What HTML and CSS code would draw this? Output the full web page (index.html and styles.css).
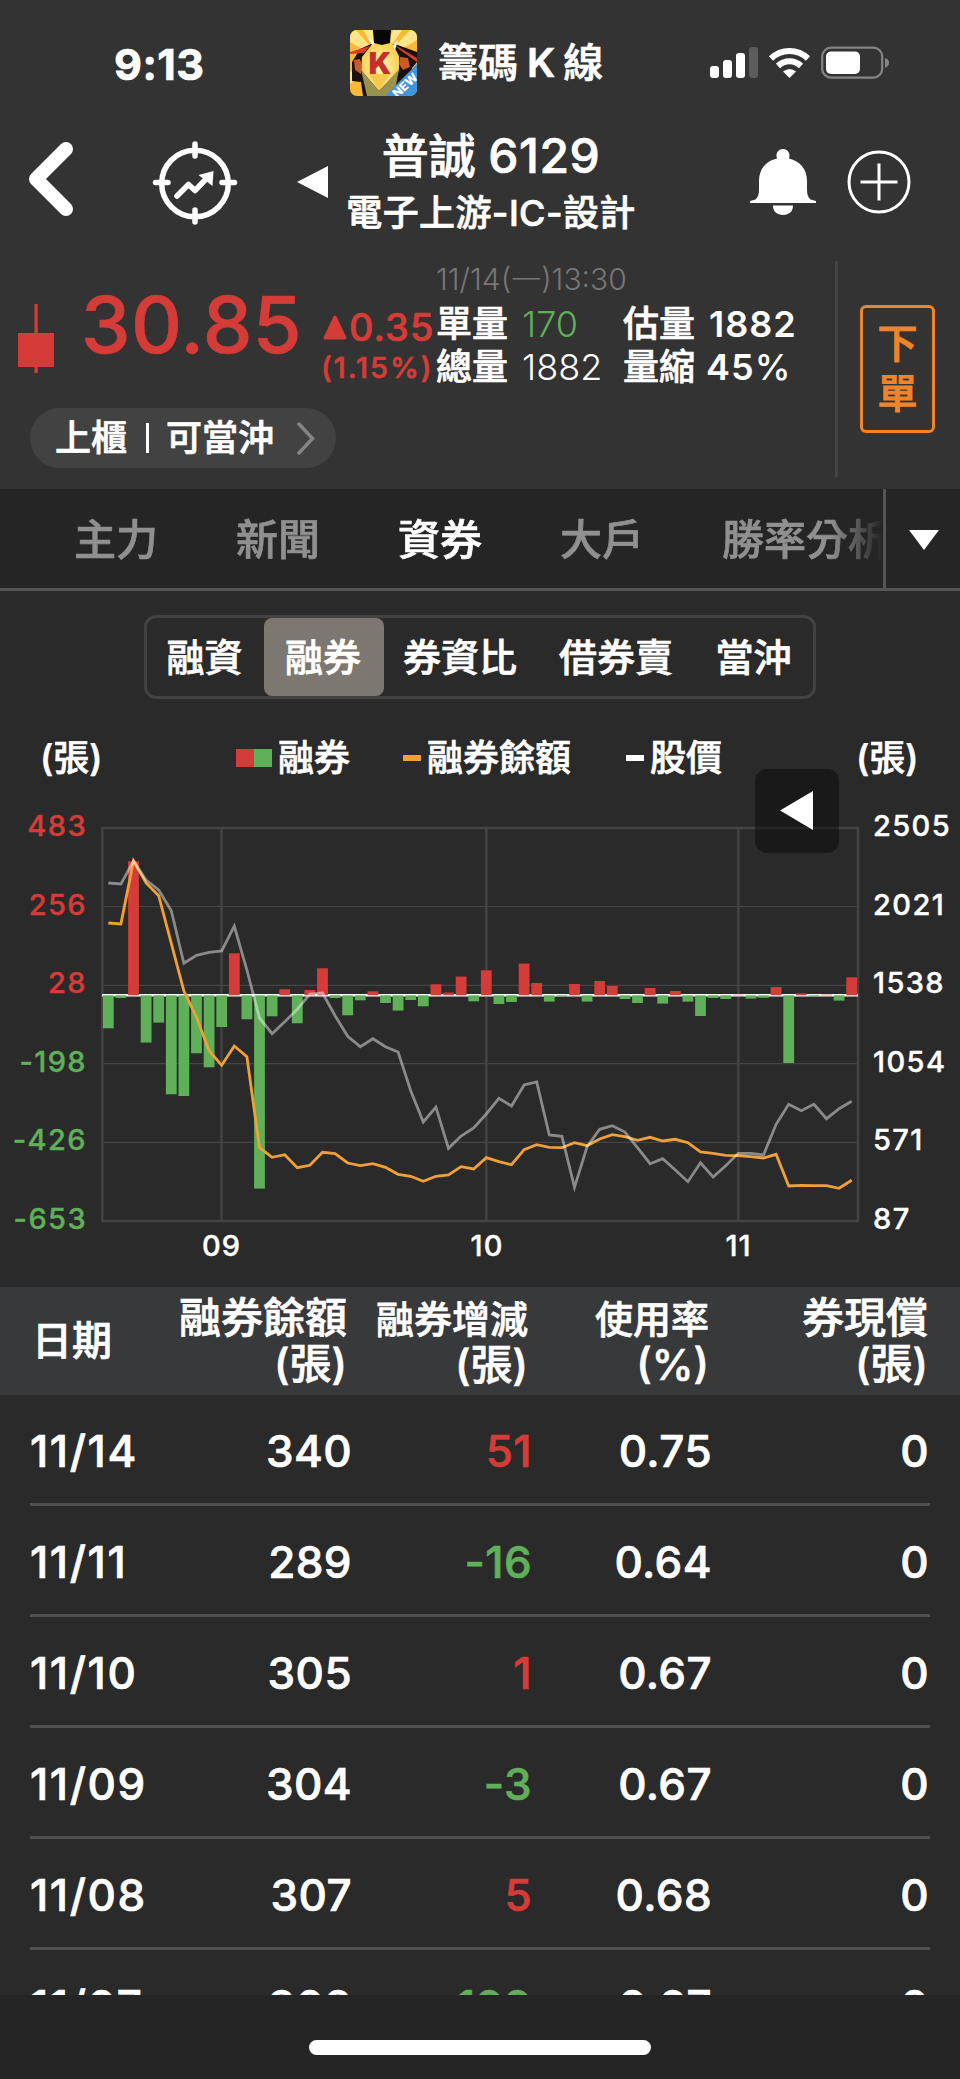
FILE: index.html
```html
<!DOCTYPE html>
<html lang="zh-Hant">
<head>
    <meta charset="UTF-8">
    <meta name="viewport" content="width=device-width, initial-scale=1.0">
    <title>普誠 6129</title>
    <link rel="stylesheet" href="styles.css">
</head>
<body>
    <header class="header">
        <div class="status-bar">
            <span class="clock">9:13</span>
            <div class="app-name">
                <svg class="app-icon" width="67" height="66" viewBox="0 0 67 66">
                    <defs>
                        <clipPath id="iconClip"><rect width="67" height="66" rx="7"/></clipPath>
                        <radialGradient id="iconGlow"><stop offset="0" stop-color="#fffbc0"/><stop offset="1" stop-color="#f8d050"/></radialGradient>
                    </defs>
                    <g clip-path="url(#iconClip)">
                        <rect width="67" height="66" fill="#f8b936"/>
                        <path d="M32 30L0 12V0h6zM32 30L13 0h9zM32 30L43 0h9zM32 30L60 0h7v10zM32 30L0 42v12z" fill="#fde58a"/>
                        <path d="M21 14L10 19 2 32v19l9 1 2 14h46l3-28 5-6V22L45 14z" fill="#19110f"/>
                        <path d="M20 16L0 22v2l14-1zM45 15l22 13v4L50 20z" fill="#d83b2c"/>
                        <path d="M23 13L12 27l-1 13 18 21 20-20V26L42 13z" fill="url(#iconGlow)"/>
                        <path d="M11 40l18 21 20-22-5 27H17z" fill="#9a9350"/>
                        <path d="M19 44l10 16 11-16z" fill="#f7c94a"/>
                        <path d="M23 16l-6-9 7 5zM43 15l5-5-3 10z" fill="#fff"/>
                        <path d="M23 0h18l-1 13-8 2-8-2z" fill="#080707"/>
                        <path d="M4 30l6-1 2 7-1 8-6-4zM50 27l8 1 2 9-7 3-4-6z" fill="#c85a2b"/>
                        <path d="M35 66L67 34v32z" fill="#4193dc"/>
                        <text x="30" y="43.500" class="icon-k">K</text>
                        <text x="56" y="59" class="icon-new" transform="rotate(-43 56 56)">NEW</text>
                    </g>
                </svg>
                <span>籌碼<span class="app-k">K</span>線</span>
            </div>
            <svg class="status-icons" width="180" height="34" viewBox="0 0 180 34">
                <rect x="0" y="20" width="9" height="12" rx="3" fill="#fff"/>
                <rect x="13" y="14" width="9" height="18" rx="3" fill="#fff"/>
                <rect x="26" y="7" width="9" height="25" rx="3" fill="#fff"/>
                <rect x="39" y="1" width="9" height="31" rx="3" fill="#5c5c5c"/>
                <path d="M61 12.500A26.500 26.500 0 0 1 98 12.500" fill="none" stroke="#fff" stroke-width="6"/>
                <path d="M68 20A16.500 16.500 0 0 1 91 20" fill="none" stroke="#fff" stroke-width="6"/>
                <path d="M73 25.500q6.500-5 13 0L79.500 32z" fill="#fff"/>
                <rect x="112.200" y="1.700" width="60" height="30" rx="9" fill="none" stroke="#858585" stroke-width="2.200"/>
                <rect x="116" y="5.500" width="34" height="22.500" rx="5" fill="#fff"/>
                <path d="M175 12q4 1 4 4.700t-4 5z" fill="#858585"/>
            </svg>
        </div>

        <nav class="nav">
            <svg class="back" width="46" height="76" viewBox="0 0 46 76">
                <path d="M38 8L8 38l30 30" fill="none" stroke="#fff" stroke-width="14" stroke-linecap="round" stroke-linejoin="round"/>
            </svg>
            <svg class="target" width="86" height="86" viewBox="0 0 86 86" fill="none" stroke="#fff" stroke-width="5.500" stroke-linecap="round">
                <circle cx="43" cy="43.500" r="33.300"/>
                <path d="M43 4v12M43 70v12M3.500 42.500H16M70 42.500h12.500"/>
                <path d="M25 56l11.500-11.500L43 50.500 55 38" stroke-linejoin="round"/>
                <path d="M61.500 31l-15 4 14 11z" fill="#fff" stroke="none"/>
            </svg>
            <svg class="prev" width="31" height="32" viewBox="0 0 31 32"><path d="M0 16L31 0v32z" fill="#fff"/></svg>
            <div class="stock-title">
                <h1>普誠 <span class="code">6129</span></h1>
                <p>電子上游-IC-設計</p>
            </div>
            <svg class="bell" width="66" height="67" viewBox="0 0 66 67" fill="#fff">
                <path d="M33 0c4 0 6.500 3 6.500 6.500 0 1-.2 2-.6 3C50 12 57 20 57 32v8c0 5 .8 8 3.500 10.500L66 52v2H0v-2l5.500-1.500C8.200 48 9 45 9 40v-8c0-12 7-20 18.100-22.500-.4-1-.6-2-.6-3C26.500 3 29 0 33 0z"/>
                <path d="M23 56.500h20c0 6-4 9.500-10 9.500s-10-3.500-10-9.500z"/>
            </svg>
            <svg class="plus" width="64" height="64" viewBox="0 0 64 64" fill="none" stroke="#fff" stroke-width="3">
                <circle cx="32" cy="32" r="30"/>
                <path d="M32 13.500v37M13.500 32h37"/>
            </svg>
        </nav>

        <section class="quote">
            <div class="quote-main">
                <div class="quote-row">
                    <svg class="candle" width="36" height="69" viewBox="0 0 36 69" fill="#d63c37">
                        <path d="M16.500 0h3.200v69h-3.200zM0 29h36v34H0z"/>
                    </svg>
                    <strong class="price">30.85</strong>
                    <div class="change">
                        <div class="change-value">
                            <svg width="24" height="25" viewBox="0 0 24 25"><path d="M12 2L22 23H2z" fill="#d63c37" stroke="#d63c37" stroke-width="3" stroke-linejoin="round"/></svg>
                            <span>0.35</span>
                        </div>
                        <div class="change-percent">(1.15%)</div>
                    </div>
                    <div class="volume">
                        <div class="time">11/14(一)13:30</div>
                        <div class="volume-row">
                            <span>單量</span><span class="light green">170</span><span>估量</span><span class="num">1882</span>
                        </div>
                        <div class="volume-row">
                            <span>總量</span><span class="light">1882</span><span>量縮</span><span class="num ratio">45<span class="sign">%</span></span>
                        </div>
                    </div>
                </div>
                <div class="pill">
                    <span>上櫃</span><i class="bar"></i><span>可當沖</span>
                    <svg width="18" height="33" viewBox="0 0 18 33"><path d="M2 2l13.500 14.500L2 31" fill="none" stroke="#858585" stroke-width="3.500" stroke-linecap="round"/></svg>
                </div>
            </div>
            <div class="order">
                <button class="order-button">下<br>單</button>
            </div>
        </section>
    </header>

    <div class="tabs">
        <div class="tab-list">
            <span>主力</span>
            <span>新聞</span>
            <span class="active">資券</span>
            <span>大戶</span>
            <span>勝率分析</span>
        </div>
        <div class="tab-more">
            <svg width="30" height="20" viewBox="0 0 30 20"><path d="M0 0h30L15 20z" fill="#fff"/></svg>
        </div>
    </div>

    <main>
        <div class="segment">
            <span>融資</span>
            <span class="active">融券</span>
            <span>券資比</span>
            <span>借券賣</span>
            <span>當沖</span>
        </div>

        <div class="legend">
            <span class="unit">(張)</span>
            <span class="key"><i class="mark red"></i><i class="mark green-mark"></i>融券</span>
            <span class="key"><i class="mark dash orange"></i>融券餘額</span>
            <span class="key"><i class="mark dash white"></i>股價</span>
            <span class="unit">(張)</span>
        </div>

        <div class="chart">
            <div class="axis axis-left">
                <span class="up">483</span><span class="up">256</span><span class="up">28</span>
                <span class="down">-198</span><span class="down">-426</span><span class="down">-653</span>
            </div>
            <svg class="plot" width="762" height="400" viewBox="99 825 762 400">
                <g stroke="#444" stroke-width="1.200">
                    <path d="M102 906.500h756M102 985.300h756M102 1063.700h756M102 1142.300h756"/>
                </g>
                <g stroke="#434343" stroke-width="2.500" fill="none">
                    <path d="M221.500 828v393M486.300 828v393M738.300 828v393"/>
                    <rect x="102.300" y="828" width="755.700" height="393"/>
                </g>
                <path d="M102 995.200h756" stroke="#fff" stroke-width="2.600"/>
                <g id="bars"></g>
                <polyline id="balanceLine" fill="none" stroke="#f0a036" stroke-width="2.800"/>
                <polyline id="priceLine" fill="none" stroke="#fff" stroke-opacity="0.450" stroke-width="2.800"/>
            </svg>
            <div class="axis axis-right">
                <span>2505</span><span>2021</span><span>1538</span>
                <span>1054</span><span>571</span><span>87</span>
            </div>
            <button class="expand">
                <svg width="33" height="39" viewBox="0 0 33 39"><path d="M0 19.500L33 0v39z" fill="#fff"/></svg>
            </button>
        </div>
        <div class="months"><span>09</span><span>10</span><span>11</span></div>

        <div class="table">
            <div class="row head">
                <span class="head-date">日期</span>
                <span>融券餘額<br>(張)</span>
                <span><small>融券增減</small><br>(張)</span>
                <span><small>使用率</small><br>(%)</span>
                <span>券現償<br>(張)</span>
            </div>
            <div class="row"><span>11/14</span><span>340</span><span class="up">51</span><span>0.75</span><span>0</span></div>
            <div class="row"><span>11/11</span><span>289</span><span class="down">-16</span><span>0.64</span><span>0</span></div>
            <div class="row"><span>11/10</span><span>305</span><span class="up">1</span><span>0.67</span><span>0</span></div>
            <div class="row"><span>11/09</span><span>304</span><span class="down">-3</span><span>0.67</span><span>0</span></div>
            <div class="row"><span>11/08</span><span>307</span><span class="up">5</span><span>0.68</span><span>0</span></div>
            <div class="row"><span>11/07</span><span>302</span><span class="down">-199</span><span>0.67</span><span>0</span></div>
        </div>
    </main>

    <footer class="home-bar"><div class="home-indicator"></div></footer>

    <script>
        var step = 12.6;
        var firstX = 108.3;
        var zeroY = 995.3;

        // bar heights, positive is up
        var bars = [-33, -2.7, 134, -47.3, -27.3, -99, -100.7, -58, -72, -31.7, 42, -24, -193.3, -21, 6,
            -28, 5.3, 27, -2.7, -20, -5, 4, -7.7, -15.3, -4.7, -11, 11, 2.7, 18.7, -6,
            25, -8.7, -6.7, 31.7, 12.3, -6.3, -1, 11.3, -6.3, 14.3, 9.3, -3.7, -7.7, 7.3, -8.3,
            4.3, -6.3, -20.7, -2.7, -3.7, 0.5, -3.3, -2.5, 8.3, -67.7, 2, -1, 0.6, -5.3, 18];

        var price = [883, 884, 861, 880, 890, 910.7, 963.3, 955.3, 952.3, 951, 926, 970, 1018, 1033.7, 1021.7,
            1009.3, 994, 993, 1015.7, 1036.3, 1046.7, 1038.7, 1046.7, 1052, 1090.7, 1122, 1107, 1148.3, 1136, 1128,
            1114, 1098.3, 1106, 1085, 1082, 1135, 1136.3, 1187.3, 1146.7, 1129.3, 1125.7, 1132, 1147.7, 1163.7, 1158.7,
            1170, 1181.7, 1162.7, 1177, 1165.7, 1153.3, 1153.3, 1155, 1124.3, 1104.3, 1110.7, 1104.3, 1118.7, 1108.7, 1101.3];

        var balance = [923, 924, 861, 883, 895.7, 943.3, 991, 1017.3, 1050.7, 1065.3, 1046, 1056.7, 1147.7, 1157.3, 1154.7,
            1167.7, 1165.3, 1152.3, 1153.7, 1163, 1165.7, 1163.7, 1167.3, 1174.3, 1176.3, 1181.3, 1176.3, 1175, 1166.7, 1169,
            1157.7, 1161.7, 1164.7, 1149.7, 1144.7, 1147.3, 1147.7, 1142.7, 1145.7, 1139, 1134.7, 1136.7, 1140.3, 1137.3, 1141,
            1139.3, 1142.7, 1152, 1153.3, 1155.3, 1155.7, 1156.7, 1158, 1154.3, 1186, 1185.3, 1185.7, 1185.7, 1188.3, 1180.3];

        function drawLine(id, values) {
            var points = values.map(function(y, i) {
                return (firstX + i * step).toFixed(1) + "," + y;
            });
            document.getElementById(id).setAttribute("points", points.join(" "));
        }

        bars.forEach(function(value, i) {
            var rect = document.createElementNS("http://www.w3.org/2000/svg", "rect");
            rect.setAttribute("x", firstX + i * step - 5.4);
            rect.setAttribute("y", value > 0 ? zeroY - value : zeroY);
            rect.setAttribute("width", 10.8);
            rect.setAttribute("height", Math.abs(value));
            rect.setAttribute("fill", value > 0 ? "#d63c37" : "#5fb058");
            document.getElementById("bars").appendChild(rect);
        });
        drawLine("balanceLine", balance);
        drawLine("priceLine", price);
    </script>
</body>
</html>
```
FILE: styles.css
```css
* {
    box-sizing: border-box;
}
body {
    margin: 0;
    width: 960px;
    height: 2079px;
    overflow: hidden;
    background-color: #2a2a2a;
    color: #fff;
    font-family: Inter, "Noto Sans CJK TC", sans-serif;
    font-weight: 500;
    -webkit-text-stroke: 0.7px;
    display: flex;
    flex-direction: column;
}
svg {
    display: block;
    flex: none;
}
button {
    padding: 0;
    font: inherit;
    color: inherit;
}
h1, p {
    margin: 0;
    font-weight: 500;
}
.up {
    color: #d63c37;
}
.down, .green {
    color: #5fb058;
}

/* header */
.header {
    height: 489px;
    flex: none;
    background-color: #333;
}
.status-bar {
    height: 126px;
    display: flex;
    align-items: center;
}
.clock {
    width: 236px;
    margin-left: 114px;
    padding-top: 2px;
    font-size: 43px;
    font-weight: 700;
    line-height: 50px;
    letter-spacing: 0.5px;
}
.app-name {
    width: 360px;
    display: flex;
    align-items: center;
    gap: 21px;
    font-size: 40px;
    line-height: 60px;
    white-space: nowrap;
}
.app-k {
    margin: 0 8px 0 9px;
    font-weight: 600;
}
.icon-k {
    font: 900 30px Inter, sans-serif;
    fill: #c62f2a;
    text-anchor: middle;
}
.icon-new {
    font: 800 12px Inter, sans-serif;
    fill: #fff;
    text-anchor: middle;
}
.nav {
    height: 112px;
    display: flex;
    align-items: center;
}
.back {
    margin: 0 0 6px 28px;
}
.target {
    margin: 2px 0 0 78px;
}
.prev {
    margin-left: 59px;
}
.stock-title {
    width: 326px;
    padding-top: 4px;
    text-align: center;
    white-space: nowrap;
}
.stock-title h1 {
    font-size: 47px;
    line-height: 58px;
}
.stock-title .code {
    font-size: 48px;
    letter-spacing: 0.5px;
}
.stock-title p {
    font-size: 36px;
    line-height: 56px;
    letter-spacing: 0.4px;
}
.bell {
    margin-left: 96px;
}
.plus {
    margin-left: 31px;
}
.quote {
    height: 251px;
    display: flex;
    padding-top: 23px;
}
.quote-main {
    width: 835px;
}
.quote-row {
    height: 147px;
    display: flex;
}
.candle {
    margin: 43px 0 0 18px;
}
.price {
    width: 240px;
    margin: 13px 0 0 27px;
    font-size: 79px;
    font-weight: 500;
    line-height: 100px;
    letter-spacing: 0.4px;
    color: #d63c37;
}
.change {
    width: 115px;
    margin-top: 45px;
    color: #d63c37;
    white-space: nowrap;
}
.change-value {
    display: flex;
    align-items: center;
    gap: 2px;
    font-size: 38px;
    line-height: 42px;
    letter-spacing: 1px;
}
.change-value svg {
    margin-left: 2px;
}
.change-percent {
    font-size: 29px;
    line-height: 40px;
    letter-spacing: 2px;
}
.volume {
    white-space: nowrap;
}
.time {
    height: 42px;
    font-size: 30px;
    font-weight: 300;
    line-height: 36px;
    color: #777;
    -webkit-text-stroke: 0;
}
.volume-row {
    display: grid;
    grid-template-columns: 86px 101px 86px 100px;
    font-size: 36px;
    line-height: 43px;
}
.light {
    font-weight: 300;
    -webkit-text-stroke: 0;
}
.num {
    font-weight: 600;
    letter-spacing: 1px;
    -webkit-text-stroke: 0;
}
.ratio {
    margin-left: -3px;
}
.sign {
    font-weight: 500;
}
.pill {
    width: 306px;
    height: 60px;
    margin-left: 30px;
    padding-left: 25px;
    display: flex;
    align-items: center;
    border-radius: 30px;
    background-color: #424242;
    font-size: 36px;
    line-height: 60px;
}
.pill .bar {
    width: 3px;
    height: 30px;
    margin: 0 17px 0 19px;
    background-color: #fff;
}
.pill svg {
    margin-left: 23px;
}
.order {
    height: 216px;
    width: 125px;
    padding: 44px 0 0 22px;
    border-left: 3px solid #444;
}
.order-button {
    display: block;
    width: 75px;
    height: 128px;
    border: 3px solid #ef8429;
    border-radius: 6px;
    background: none;
    color: #ef8429;
    font-size: 40px;
    line-height: 50px;
    -webkit-text-stroke: 1px;
}

/* tabs */
.tabs {
    height: 102px;
    flex: none;
    display: flex;
    border-bottom: 3px solid #555;
    background-color: #252525;
    font-size: 42px;
    line-height: 102px;
}
.tab-list {
    width: 883px;
    padding-left: 74px;
    display: flex;
    gap: 78px;
    overflow: hidden;
    white-space: nowrap;
    color: #909090;
    -webkit-mask-image: linear-gradient(to right, #000 830px, transparent 883px);
    mask-image: linear-gradient(to right, #000 830px, transparent 883px);
}
.tab-list .active {
    color: #fff;
}
.tab-more {
    flex: 1;
    padding: 2px 0 0 2px;
    display: flex;
    align-items: center;
    justify-content: center;
    border-left: 3px solid #555;
}

/* content */
main {
    height: 1404px;
    overflow: hidden;
}
.segment {
    width: 672px;
    height: 84px;
    margin: 24px auto 0;
    display: grid;
    grid-template-columns: 117px 120px 154px 158px 117px;
    border: 3px solid #424242;
    border-radius: 12px;
    font-size: 38px;
    line-height: 78px;
    text-align: center;
}
.segment span {
    padding-right: 2px;
}
.segment .active {
    border-radius: 8px;
    background-color: #7d7771;
}
.legend {
    height: 116px;
    display: grid;
    grid-template-columns: 196px 167px 223px 230px 103px;
    padding-left: 40px;
    font-size: 36px;
    line-height: 118px;
    white-space: nowrap;
}
.key {
    display: flex;
    align-items: center;
}
.mark {
    width: 18px;
    height: 18px;
}
.green-mark {
    margin-right: 6px;
    background-color: #5fb058;
}
.red {
    background-color: #d63c37;
}
.dash {
    height: 6px;
    margin-right: 6px;
}
.orange {
    background-color: #f0a036;
}
.white {
    background-color: #fff;
}
.chart {
    position: relative;
    height: 410px;
    padding-top: 10px;
    display: flex;
}
.axis {
    height: 429px;
    margin-top: -17px;
    display: flex;
    flex-direction: column;
    justify-content: space-between;
    font-size: 29px;
    line-height: 36px;
    letter-spacing: 1.4px;
    -webkit-text-stroke: 0.4px;
}
.axis-left {
    width: 99px;
    padding-right: 12px;
    text-align: right;
}
.axis-right {
    padding-left: 12px;
}
.expand {
    position: absolute;
    left: 755px;
    top: -46px;
    width: 84px;
    height: 84px;
    padding: 0 0 2px 25px;
    border: none;
    border-radius: 12px;
    background-color: rgba(0, 0, 0, 0.4);
}
.months {
    height: 62px;
    display: grid;
    grid-template-columns: 265px 266px 237px;
    padding-left: 89px;
    font-size: 29px;
    line-height: 42px;
    letter-spacing: 1px;
    text-align: center;
    -webkit-text-stroke: 0.4px;
}

/* table */
.row {
    height: 111px;
    margin: 0 30px;
    padding-top: 4px;
    display: grid;
    grid-template-columns: 120px 202px 180px 180px 217px;
    align-items: center;
    border-bottom: 3px solid #505050;
    font-size: 44px;
    line-height: 60px;
    letter-spacing: 0.4px;
    text-align: right;
    white-space: nowrap;
}
.row span:first-child {
    text-align: left;
    letter-spacing: 1.6px;
}
.row.head {
    height: 108px;
    margin: 0;
    padding: 0 0 0 32px;
    grid-template-columns: 120px 195px 181px 181px 219px;
    border: none;
    background-color: #38393b;
    font-size: 42px;
    line-height: 46px;
    letter-spacing: 0;
}
.row small {
    font-size: 38px;
}
.row.head .head-date {
    font-size: 40px;
    letter-spacing: 0;
}
.home-bar {
    height: 84px;
    padding-top: 45px;
    background-color: #252525;
}
.home-indicator {
    width: 342px;
    height: 15px;
    margin: 0 auto;
    border-radius: 8px;
    background-color: #fff;
}
```
